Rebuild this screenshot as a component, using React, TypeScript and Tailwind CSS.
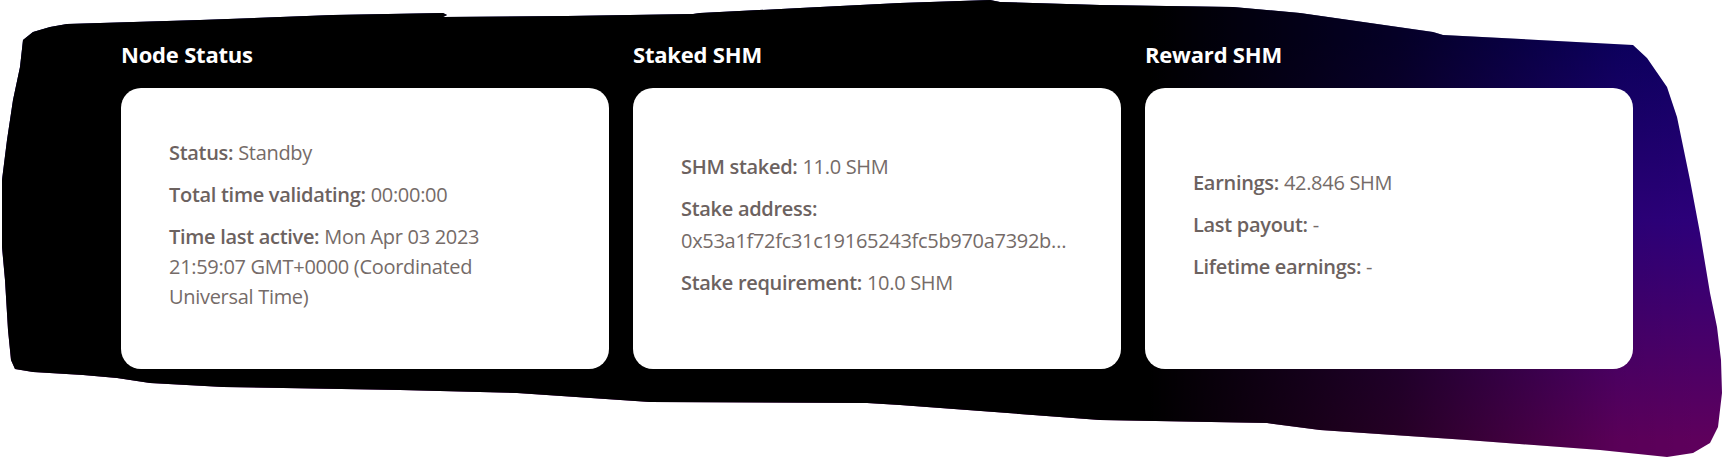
const blob =
  "M23 40 L33 32 L50 27 L67 24 L200 20 L333 15 L443 13 L447 15 L443 17 L567 16 L693 14 L700 13 L800 8 L900 3 L990 0 L1000 2 L1100 5 L1233 7 L1300 13 L1433 32 L1443 35 L1633 45 L1647 58 L1667 87 L1677 117 L1690 180 L1700 233 L1710 293 L1717 327 L1721 360 L1722 393 L1718 427 L1710 443 L1693 453 L1667 457 L1600 450 L1467 440 L1320 430 L1267 423 L1100 420 L1033 415 L900 405 L867 403 L650 402 L517 393 L400 390 L223 387 L150 383 L117 378 L83 375 L33 372 L15 369 L11 360 L8 330 L5 280 L2 247 L2 180 L7 140 L13 100 L20 67 Z";

function Backdrop() {
  return (
    <svg className="absolute inset-0 w-[1723px] h-[459px]" viewBox="0 0 1723 459" fill="none">
      <defs>
        <linearGradient id="tint" x1="0" y1="40" x2="0" y2="440" gradientUnits="userSpaceOnUse">
          <stop offset="0" stopColor="#0c0060" />
          <stop offset="0.45" stopColor="#2c007a" />
          <stop offset="1" stopColor="#5e005c" />
        </linearGradient>
        <linearGradient id="shade" x1="1150" y1="0" x2="1700" y2="0" gradientUnits="userSpaceOnUse">
          <stop offset="0" stopColor="#000" stopOpacity="1" />
          <stop offset="0.45" stopColor="#000" stopOpacity="0.6" />
          <stop offset="0.85" stopColor="#000" stopOpacity="0.05" />
          <stop offset="1" stopColor="#000" stopOpacity="0" />
        </linearGradient>
      </defs>
      <path d={blob} fill="url(#tint)" />
      <path d={blob} fill="url(#shade)" />
    </svg>
  );
}

type Row = { label: string; value: string; block?: boolean };

const columns: { title: string; rows: Row[] }[] = [
  {
    title: "Node Status",
    rows: [
      { label: "Status:", value: "Standby" },
      { label: "Total time validating:", value: "00:00:00" },
      {
        label: "Time last active:",
        value: "Mon Apr 03 2023 21:59:07 GMT+0000 (Coordinated Universal Time)",
      },
    ],
  },
  {
    title: "Staked SHM",
    rows: [
      { label: "SHM staked:", value: "11.0 SHM" },
      { label: "Stake address:", value: "0x53a1f72fc31c19165243fc5b970a7392b1f5e8a7", block: true },
      { label: "Stake requirement:", value: "10.0 SHM" },
    ],
  },
  {
    title: "Reward SHM",
    rows: [
      { label: "Earnings:", value: "42.846 SHM" },
      { label: "Last payout:", value: "-" },
      { label: "Lifetime earnings:", value: "-" },
    ],
  },
];

export default function App() {
  return (
    <div className="relative w-[1723px] h-[459px] bg-white overflow-hidden font-['Open_Sans',sans-serif]">
      <Backdrop />
      <div className="relative flex gap-[24px] pl-[121px] pt-[38px]">
        {columns.map((col) => (
          <div key={col.title} className="w-[488px] flex flex-col">
            <h2 className="text-white font-bold text-[22px] leading-[32px] tracking-[-0.2px] mb-[18px]">
              {col.title}
            </h2>
            <div className="bg-white rounded-[20px] h-[281px] pl-[48px] pr-[50px] pb-[7px] flex flex-col justify-center gap-[12px] text-[#756b68] text-[20px] leading-[30px] tracking-[-0.3px]">
              {col.rows.map((r) =>
                r.block ? (
                  <div key={r.label}>
                    <div className="font-semibold text-[#6c625f]">{r.label}</div>
                    <div className="truncate mt-[2px]">{r.value}</div>
                  </div>
                ) : (
                  <p key={r.label}>
                    <span className="font-semibold text-[#6c625f]">{r.label}</span> {r.value}
                  </p>
                )
              )}
            </div>
          </div>
        ))}
      </div>
    </div>
  );
}
